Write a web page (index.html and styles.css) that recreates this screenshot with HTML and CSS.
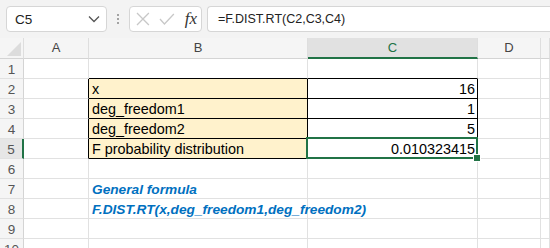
FILE: index.html
```html
<!DOCTYPE html>
<html lang="en">
<head>
<meta charset="UTF-8">
<title>F.DIST.RT</title>
<link rel="stylesheet" href="styles.css">
</head>
<body>

<!-- Formula bar -->
<div class="toolbar">
  <div class="namebox">
    <span>C5</span>
    <svg width="12" height="8" viewBox="0 0 12 8"><path d="M1 1.5 L6 6.5 L11 1.5" fill="none" stroke="#555" stroke-width="1.3"/></svg>
  </div>
  <div class="dots"><i></i><i></i><i></i></div>
  <div class="fxbox">
    <svg width="14" height="14" viewBox="0 0 14 14"><path d="M1 1 L13 13 M13 1 L1 13" stroke="#c8c8c8" stroke-width="1.3"/></svg>
    <svg width="16" height="12" viewBox="0 0 16 12"><path d="M1 6 L5.5 11 L15 1" fill="none" stroke="#c8c8c8" stroke-width="1.3"/></svg>
    <span class="fx">fx</span>
  </div>
  <div class="formula">=F.DIST.RT(C2,C3,C4)</div>
</div>

<!-- Grid -->
<div class="sheet">
  <div class="row head">
    <div class="cell rh corner"><svg width="14" height="14" viewBox="0 0 14 14"><path d="M14 0 L14 14 L0 14 Z" fill="#dcdcdc"/></svg></div>
    <div class="cell ca">A</div>
    <div class="cell cb">B</div>
    <div class="cell cc sel">C</div>
    <div class="cell cd">D</div>
    <div class="cell ce"></div>
  </div>

  <div class="row">
    <div class="cell rh">1</div>
    <div class="cell ca"></div>
    <div class="cell cb bb"></div>
    <div class="cell cc bb"></div>
    <div class="cell cd"></div>
    <div class="cell ce"></div>
  </div>
  <div class="row">
    <div class="cell rh">2</div>
    <div class="cell ca br"></div>
    <div class="cell cb box fill">x</div>
    <div class="cell cc box num">16</div>
    <div class="cell cd"></div>
    <div class="cell ce"></div>
  </div>
  <div class="row">
    <div class="cell rh">3</div>
    <div class="cell ca br"></div>
    <div class="cell cb box fill">deg_freedom1</div>
    <div class="cell cc box num">1</div>
    <div class="cell cd"></div>
    <div class="cell ce"></div>
  </div>
  <div class="row">
    <div class="cell rh">4</div>
    <div class="cell ca br"></div>
    <div class="cell cb box fill">deg_freedom2</div>
    <div class="cell cc box num">5</div>
    <div class="cell cd"></div>
    <div class="cell ce"></div>
  </div>
  <div class="row">
    <div class="cell rh active">5</div>
    <div class="cell ca br"></div>
    <div class="cell cb box fill">F probability distribution</div>
    <div class="cell cc box num current">0.010323415</div>
    <div class="cell cd"></div>
    <div class="cell ce"></div>
  </div>
  <div class="row">
    <div class="cell rh">6</div>
    <div class="cell ca"></div>
    <div class="cell cb"></div>
    <div class="cell cc"></div>
    <div class="cell cd"></div>
    <div class="cell ce"></div>
  </div>
  <div class="row">
    <div class="cell rh">7</div>
    <div class="cell ca"></div>
    <div class="cell cb note">General formula</div>
    <div class="cell cc"></div>
    <div class="cell cd"></div>
    <div class="cell ce"></div>
  </div>
  <div class="row">
    <div class="cell rh">8</div>
    <div class="cell ca"></div>
    <div class="cell cb note spill">F.DIST.RT(x,deg_freedom1,deg_freedom2)</div>
    <div class="cell cc"></div>
    <div class="cell cd"></div>
    <div class="cell ce"></div>
  </div>
  <div class="row">
    <div class="cell rh">9</div>
    <div class="cell ca"></div>
    <div class="cell cb"></div>
    <div class="cell cc"></div>
    <div class="cell cd"></div>
    <div class="cell ce"></div>
  </div>
  <div class="row">
    <div class="cell rh">10</div>
    <div class="cell ca"></div>
    <div class="cell cb"></div>
    <div class="cell cc"></div>
    <div class="cell cd"></div>
    <div class="cell ce"></div>
  </div>
</div>

</body>
</html>
```

FILE: styles.css
```css
body {
  margin: 0;
  font-family: "Liberation Sans", Arial, sans-serif;
  background: #fff;
  overflow: hidden;
}

/* formula bar */
.toolbar {
  height: 38px;
  background: #f3f3f3;
  display: flex;
  align-items: flex-start;
  padding: 6px 0 0 6px;
  box-sizing: border-box;
}
.namebox, .fxbox, .formula {
  height: 26px;
  box-sizing: border-box;
  background: #fff;
  border: 1px solid #d6d6d6;
  border-radius: 4px;
  display: flex;
  align-items: center;
}
.namebox {
  width: 101px;
  padding: 0 6px 0 8px;
  justify-content: space-between;
  font-size: 13.5px;
  color: #222;
}
.dots {
  width: 22px;
  height: 26px;
  display: flex;
  flex-direction: column;
  align-items: center;
  justify-content: center;
  gap: 2px;
}
.dots i {
  width: 2px;
  height: 2px;
  background: #888;
  border-radius: 1px;
}
.fxbox {
  width: 73px;
  padding: 0 4px 0 6px;
  gap: 9px;
}
.fx {
  font-family: "Liberation Serif", "Times New Roman", serif;
  font-style: italic;
  font-size: 17px;
  color: #333;
  margin-left: 1px;
}
.formula {
  margin-left: 5px;
  flex: 1;
  border-right: none;
  border-radius: 4px 0 0 4px;
  padding-left: 10px;
  font-size: 12.5px;
  color: #222;
}

/* grid */
.row {
  display: flex;
  height: 20px;
}
.row.head {
  height: 21px;
  background: #f5f5f5;
}
.cell {
  box-sizing: border-box;
  border-right: 1px solid #e1e1e1;
  border-bottom: 1px solid #e1e1e1;
  font-size: 14.4px;
  line-height: 19px;
  padding: 1px 3px 0;
  color: #000;
  white-space: nowrap;
}
.head .cell {
  text-align: center;
  font-size: 13px;
  line-height: 20px;
  padding-top: 0;
  color: #444;
  border-bottom-color: #d4d4d4;
  border-right-color: #dedede;
}
.rh {
  width: 24px;
  background: #f5f5f5;
  text-align: center;
  color: #555;
  font-size: 13.5px;
  padding: 1px 0 0;
  border-right-color: #d4d4d4;
}
.corner {
  display: flex;
  align-items: flex-end;
  justify-content: flex-end;
  padding: 0 2px 2px 0;
}
.ca { width: 65px; }
.cb { width: 219px; }
.cc { width: 170px; }
.cd { width: 63px; }
.ce { flex: 1; }

.head .sel {
  background: #e1e1e1;
  color: #217346;
  border-bottom: 2px solid #217346;
}
.rh.active {
  background: #e6e6e6;
  border-right: 2px solid #217346;
}

/* table borders */
.bb { border-bottom-color: #000; }
.br { border-right-color: #000; }
.box {
  border-right-color: #000;
  border-bottom-color: #000;
}
.fill { background: #fff2cc; }
.num { text-align: right; padding-right: 2px; }

.current { position: relative; }
.current::after {
  content: "";
  position: absolute;
  left: -2px;
  top: -2px;
  right: -1px;
  bottom: -1px;
  border: 2px solid #217346;
}
.current::before {
  content: "";
  position: absolute;
  right: -4px;
  bottom: -4px;
  width: 6px;
  height: 6px;
  background: #217346;
  border: 1px solid #fff;
  z-index: 1;
}

.note {
  color: #0070c0;
  font-weight: bold;
  font-style: italic;
  font-size: 13.7px;
}
.spill { overflow: visible; position: relative; z-index: 1; }
```
